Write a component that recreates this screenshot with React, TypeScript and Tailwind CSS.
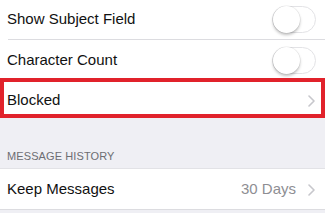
import React from 'react';

function Toggle() {
  return (
    <div className="relative w-[44px] h-[27px] rounded-full bg-white border border-[#e3e3e6]">
      <div className="absolute left-0 top-[-1px] w-[27px] h-[27px] rounded-full bg-white shadow-[0_2px_3px_rgba(0,0,0,0.25),0_0_0_0.5px_rgba(0,0,0,0.08)]" />
    </div>
  );
}

function Chevron() {
  return (
    <svg width="7" height="12" viewBox="0 0 7 12" fill="none">
      <path d="M1 1l5 5-5 5" stroke="#c7c7cc" strokeWidth="1.6" strokeLinecap="round" strokeLinejoin="round" />
    </svg>
  );
}

export default function App() {
  return (
    <div
      className="w-[325px] h-[213px] overflow-hidden bg-[#efeff4] text-[#111]"
      style={{ fontFamily: '"Liberation Sans", Arial, sans-serif' }}
    >
      <div className="bg-white">
        <div className="h-[39px] flex items-center justify-between pl-[7px] pr-[9px]">
          <span className="text-[15px]">Show Subject Field</span>
          <Toggle />
        </div>
        <div className="ml-[8px] h-px bg-[#dcdce0]" />
        <div className="h-[40px] flex items-center justify-between pl-[7px] pr-[9px]">
          <span className="text-[15px]">Character Count</span>
          <Toggle />
        </div>
        <div className="relative h-[38px] flex items-center justify-between pl-[7px] pr-[10px] pt-[3px]">
          <span className="text-[15px]">Blocked</span>
          <Chevron />
          <div className="absolute left-0 right-0 top-[-2px] bottom-0 border-[4px] border-[#e1222b]" />
        </div>
      </div>

      <div className="h-[50px] flex items-end pl-[7px] pb-[5px]">
        <span className="text-[11px] leading-[13px] text-[#6d6d72] tracking-[0.1px]">MESSAGE HISTORY</span>
      </div>

      <div className="bg-white border-t border-[#e2e2e6] h-[41px] flex items-center justify-between pl-[7px] pr-[10px] pt-[1px]">
        <span className="text-[15px]">Keep Messages</span>
        <div className="flex items-center gap-[12px]">
          <span className="text-[15px] text-[#8e8e93]">30 Days</span>
          <Chevron />
        </div>
      </div>
      <div className="h-px bg-[#dcdce0]" />
    </div>
  );
}
